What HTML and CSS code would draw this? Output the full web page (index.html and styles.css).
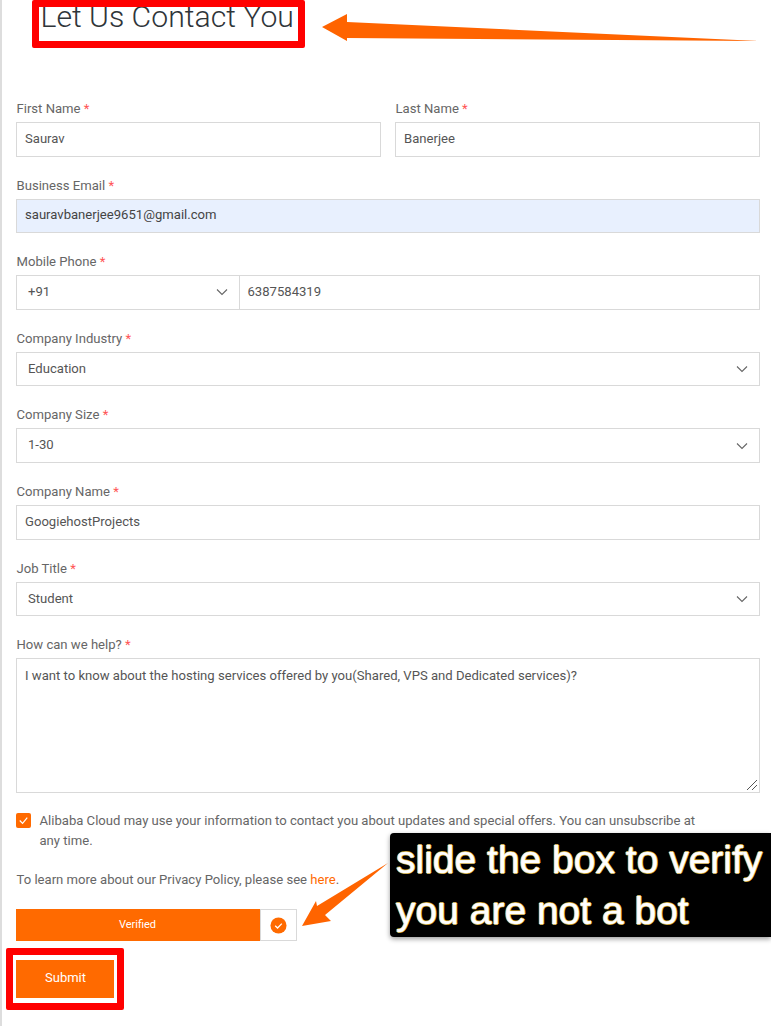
FILE: index.html
```html
<!DOCTYPE html>
<html lang="en">
<head>
<meta charset="utf-8">
<title>Let Us Contact You</title>
<link rel="stylesheet" href="styles.css">
</head>
<body>
<main class="page">
  <h1 class="title">Let Us Contact You</h1>
  <form class="form">
    <div class="row two">
      <div class="field"><div class="label">First Name <span class="req">*</span></div><div class="control">Saurav</div></div>
      <div class="field"><div class="label">Last Name <span class="req">*</span></div><div class="control">Banerjee</div></div>
    </div>
    <div class="field"><div class="label">Business Email <span class="req">*</span></div><div class="control filled">sauravbanerjee9651@gmail.com</div></div>
    <div class="field"><div class="label">Mobile Phone <span class="req">*</span></div>
      <div class="phone">
        <div class="control select code"><span>+91</span><svg class="chev" viewBox="0 0 12 8"><path d="M1 1.5l5 5 5-5"/></svg></div>
        <div class="control number">6387584319</div>
      </div>
    </div>
    <div class="field"><div class="label">Company Industry <span class="req">*</span></div><div class="control select"><span>Education</span><svg class="chev" viewBox="0 0 12 8"><path d="M1 1.5l5 5 5-5"/></svg></div></div>
    <div class="field"><div class="label">Company Size <span class="req">*</span></div><div class="control select"><span>1-30</span><svg class="chev" viewBox="0 0 12 8"><path d="M1 1.5l5 5 5-5"/></svg></div></div>
    <div class="field"><div class="label">Company Name <span class="req">*</span></div><div class="control">GoogiehostProjects</div></div>
    <div class="field"><div class="label">Job Title <span class="req">*</span></div><div class="control select"><span>Student</span><svg class="chev" viewBox="0 0 12 8"><path d="M1 1.5l5 5 5-5"/></svg></div></div>
    <div class="field"><div class="label">How can we help? <span class="req">*</span></div>
      <div class="control area">I want to know about the hosting services offered by you(Shared, VPS and Dedicated services)?
        <svg class="grip" viewBox="0 0 12 12"><path d="M1 11L11 1M6 11l5-5"/></svg>
      </div>
    </div>
    <div class="consent">
      <span class="check"><svg viewBox="0 0 16 16"><path d="M4 8l3 3 5-6"/></svg></span>
      <p>Alibaba Cloud may use your information to contact you about updates and special offers. You can unsubscribe at any time.</p>
    </div>
    <p class="privacy">To learn more about our Privacy Policy, please see <a href="#">here</a>.</p>
    <div class="slider">
      <div class="slider-fill">Verified</div>
      <div class="slider-handle"><svg viewBox="0 0 18 18"><circle cx="9" cy="9" r="8.5"/><path d="M5.5 9.2l2.5 2.4 4.5-4.6"/></svg></div>
    </div>
    <button class="submit" type="button">Submit</button>
  </form>

  <div class="mark mark-title"></div>
  <div class="mark mark-submit"></div>
  <svg class="arrows" viewBox="0 0 771 1026">
    <polygon points="322,27 347,14 347,22 759,41 347,38 347,41"/>
    <polygon points="388,863 325,915 331,921 302,926 316,901 317,906"/>
  </svg>
  <div class="callout">slide the box to verify<br>you are not a bot</div>
</main>
</body>
</html>
```
FILE: styles.css
```css
* { box-sizing: border-box; }
html, body { margin: 0; padding: 0; background: #fff; }
body { font-family: Roboto, "Liberation Sans", sans-serif; color: #666; }
.page {
  position: relative;
  width: 771px;
  height: 1026px;
  overflow: hidden;
  border-left: 2px solid #ddd;
  padding: 0 11px 0 14px;
}
.title {
  margin: 0;
  padding: 0 0 0 24.5px;
  height: 98px;
  font-size: 30.2px;
  line-height: 34px;
  font-weight: 300;
  color: #2f3539;
}
.form { display: flex; flex-direction: column; gap: 18px; }
.row.two { display: grid; grid-template-columns: 365px 365px; gap: 14px; }
.label { height: 24px; padding: 1px 0 0 0.5px; font-size: 13.1px; line-height: 20px; color: #666; }
.req { color: #f55; }
.control {
  display: flex;
  align-items: center;
  height: 34.6px;
  padding: 0 8px 1.5px;
  border: 1px solid #d9d9d9;
  background: #fff;
  font-size: 13.1px;
  color: #555;
}
.filled { background: #e8f0fe; color: #444; padding-bottom: 2.5px; }
.select { justify-content: space-between; padding: 0 11px 1.5px; }
.chev { width: 12px; height: 8px; margin-top: 1.5px; fill: none; stroke: #666; stroke-width: 1.1; }
.phone { display: flex; }
.code { width: 223.5px; flex: none; }
.number { flex: 1; margin-left: -1px; }
.area { position: relative; align-items: flex-start; height: 135px; padding-top: 8px; padding-bottom: 0; line-height: 17px; }
.grip { position: absolute; right: 1px; bottom: 1px; width: 12px; height: 12px; fill: none; stroke: #555; stroke-width: 1; }
.consent { display: flex; align-items: flex-start; gap: 8.5px; margin-top: -0.4px; }
.check {
  flex: none;
  width: 15px;
  height: 15px;
  margin-top: 2.4px;
  border-radius: 2px;
  background: #ff6a00;
}
.check svg { display: block; width: 15px; height: 15px; fill: none; stroke: #fff; stroke-width: 1.3; }
.consent p { margin: 0; width: 665px; font-size: 13.1px; line-height: 20px; color: #666; }
.privacy { margin: 1.6px 0 0 0.5px; font-size: 13.1px; line-height: 20px; color: #666; }
.privacy a { color: #ff6a00; text-decoration: none; }
.slider { display: flex; width: 281px; height: 32px; margin-top: 1px; }
.slider-fill {
  flex: 1;
  display: flex;
  align-items: center;
  justify-content: center;
  padding: 0 1px 1px 0;
  background: #ff6a00;
  color: #fff;
  font-size: 11px;
}
.slider-handle {
  display: flex;
  align-items: center;
  justify-content: center;
  width: 37px;
  border: 1px solid #d9d9d9;
  background: #fff;
}
.slider-handle svg { width: 17px; height: 17px; }
.slider-handle circle { fill: #ff6a00; }
.slider-handle path { fill: none; stroke: #fff; stroke-width: 1.4; }
.submit {
  width: 99px;
  height: 38px;
  margin-top: 1px;
  padding: 0 0 3px;
  border: 0;
  background: #ff6a00;
  color: #fff;
  font-family: inherit;
  font-size: 13px;
}
.mark { position: absolute; background: transparent; border: 7px solid #f00; border-radius: 2px; }
.mark-title { left: 30px; top: 0; width: 273px; height: 48px; }
.mark-submit { left: 4px; top: 948px; width: 118px; height: 62px; box-shadow: inset 0 0 0 3px #fff; }
.arrows { position: absolute; left: -2px; top: 0; width: 771px; height: 1026px; fill: #ff6400; pointer-events: none; }
.callout {
  position: absolute;
  left: 388px;
  top: 833px;
  width: 381px;
  height: 104px;
  padding: 1px 0 0 6px;
  border-radius: 4px 0 0 4px;
  background: #000;
  box-shadow: 0 2px 5px rgba(0,0,0,.4);
  color: #fff;
  font-family: "Liberation Sans", Arial, sans-serif;
  font-size: 39px;
  line-height: 51px;
  white-space: nowrap;
  -webkit-text-stroke: 0.5px #fff;
  text-shadow: 1px 0 0 #b8901f, -1px 0 0 #b8901f, 0 1px 0 #b8901f, 0 -1px 0 #b8901f;
}
```
